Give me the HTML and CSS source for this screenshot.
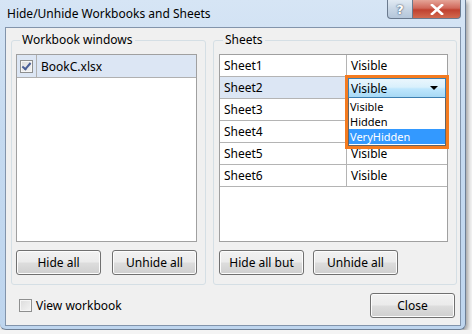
FILE: index.html
```html
<!DOCTYPE html>
<html lang="en">
<head>
    <meta charset="UTF-8">
    <title>Hide/Unhide Workbooks and Sheets</title>
    <link rel="stylesheet" href="styles.css">
</head>
<body>
<div class="window">
    <div class="titlebar">
        <span class="title">Hide/Unhide Workbooks and Sheets</span>
        <div class="caption-buttons">
            <button class="cap-help">?</button>
            <button class="cap-close">
                <svg width="14" height="11" viewBox="0 0 14 11">
                    <path d="M2 1 L12 10 M12 1 L2 10" stroke="#fff" stroke-width="2.6" stroke-linecap="square"/>
                </svg>
            </button>
        </div>
    </div>

    <div class="client">
        <div class="groups">
            <fieldset class="group group-books">
                <legend>Workbook windows</legend>
                <div class="listbox">
                    <div class="book-row selected">
                        <span class="check-cell"><span class="checkbox checked"></span></span>
                        <span class="book-name">BookC.xlsx</span>
                    </div>
                </div>
                <div class="button-row">
                    <button class="btn">Hide all</button>
                    <button class="btn">Unhide all</button>
                </div>
            </fieldset>

            <fieldset class="group group-sheets">
                <legend>Sheets</legend>
                <div class="grid-wrap">
                    <table class="sheet-grid">
                        <tr><td>Sheet1</td><td>Visible</td></tr>
                        <tr class="selected"><td>Sheet2</td><td class="combo-cell"></td></tr>
                        <tr><td>Sheet3</td><td></td></tr>
                        <tr><td>Sheet4</td><td></td></tr>
                        <tr><td>Sheet5</td><td>Visible</td></tr>
                        <tr><td>Sheet6</td><td>Visible</td></tr>
                    </table>

                    <div class="dropdown">
                        <div class="combo">
                            <span>Visible</span>
                            <span class="arrow"></span>
                        </div>
                        <ul class="options">
                            <li>Visible</li>
                            <li>Hidden</li>
                            <li class="active">VeryHidden</li>
                        </ul>
                    </div>
                </div>
                <div class="button-row">
                    <button class="btn">Hide all but</button>
                    <button class="btn">Unhide all</button>
                </div>
            </fieldset>
        </div>

        <div class="footer-row">
            <label class="view-check"><span class="checkbox"></span>View workbook</label>
            <button class="btn">Close</button>
        </div>
    </div>
</div>
</body>
</html>
```

FILE: styles.css
```css
body {
    margin: 0;
    background: #f4f4f4;
    font-family: "Noto Sans", "DejaVu Sans", sans-serif;
    font-size: 12px;
    color: #000;
}

.window {
    width: 465px;
    height: 329px;
    background: linear-gradient(180deg, #d6e5f5 0%, #c5daf0 40%, #bed5ee 100%);
    border: 1px solid #6d7f96;
    border-top: none;
    border-left: none;
    border-radius: 0 0 6px 6px;
    box-shadow: 2px 2px 4px rgba(0, 0, 0, 0.35);
    display: flex;
    flex-direction: column;
}

.titlebar {
    height: 27px;
    display: flex;
    align-items: flex-start;
}

.title {
    padding: 5px 0 0 7px;
    font-size: 12px;
    color: #000;
}

.caption-buttons {
    margin-left: auto;
    margin-right: 4px;
    display: flex;
}

.caption-buttons button {
    height: 19px;
    border: 1px solid #6a7a8e;
    border-top: none;
    padding: 0;
    display: flex;
    align-items: center;
    justify-content: center;
}

.cap-help {
    width: 26px;
    border-radius: 0 0 0 4px;
    background: linear-gradient(180deg, #e1eaf3 0%, #c8d6e5 50%, #b4c6da 100%);
    color: #fff;
    font-family: "DejaVu Sans", sans-serif;
    font-weight: bold;
    font-size: 13px;
    text-shadow: 0 0 2px #42556e, 0 0 1px #42556e;
}

.cap-close {
    width: 48px;
    border-left: none !important;
    border-radius: 0 0 4px 0;
    background: linear-gradient(180deg, #e5a497 0%, #d0685a 45%, #c0412f 55%, #d26a4f 100%);
}

.client {
    flex: 1;
    margin: 0 4px 3px 5px;
    background: #f0f0f0;
    border: 1px solid #8294ab;
    display: flex;
    flex-direction: column;
    padding: 4px 5px 0 5px;
}

.groups {
    display: flex;
    gap: 7px;
}

.group {
    margin: 0;
    border: 1px solid #d5dfe5;
    border-radius: 3px;
    padding: 0 8px 0 4px;
    height: 253px;
    box-sizing: border-box;
    display: flex;
    flex-direction: column;
}

.group legend {
    padding: 0 2px;
    margin-left: 4px;
    font-size: 12px;
    line-height: 16px;
}

.group-books {
    width: 194px;
}

.group-sheets {
    width: 244px;
    padding-left: 5px;
}

.listbox {
    height: 188px;
    background: #fff;
    border: 1px solid #a0a0a0;
    box-sizing: border-box;
    margin-top: 6px;
}

.book-row {
    height: 22px;
    display: flex;
    align-items: center;
    border-bottom: 1px solid #b0b0b0;
}

.book-row.selected {
    background: #dce6f4;
}

.check-cell {
    width: 19px;
    height: 100%;
    display: flex;
    align-items: center;
    justify-content: center;
    border-right: 1px solid #b0b0b0;
}

.book-name {
    padding-left: 4px;
}

.checkbox {
    display: inline-block;
    width: 11px;
    height: 11px;
    border: 1px solid #8e8f8f;
    background: linear-gradient(135deg, #dcdcdc 0%, #f4f4f4 100%);
    box-shadow: inset 0 0 0 1px #f6f6f6;
    position: relative;
}

.checkbox.checked::after {
    content: "";
    position: absolute;
    left: 3px;
    top: 0;
    width: 3px;
    height: 7px;
    border: solid #4a5f97;
    border-width: 0 2px 2px 0;
    transform: rotate(40deg);
}

.button-row {
    display: flex;
    gap: 11px;
    margin-top: 8px;
}

.group-sheets .button-row {
    gap: 9px;
}

.btn {
    width: 85px;
    height: 25px;
    border: 1px solid #707070;
    border-radius: 3px;
    background: linear-gradient(180deg, #f2f2f2 0%, #ebebeb 48%, #dddddd 52%, #cfcfcf 100%);
    box-shadow: inset 0 0 0 1px #fcfcfc;
    font-family: "Noto Sans", "DejaVu Sans", sans-serif;
    font-size: 12px;
    color: #000;
    padding: 0;
}

.grid-wrap {
    position: relative;
    height: 188px;
    background: #fff;
    border: 1px solid #a0a0a0;
    box-sizing: border-box;
    margin-top: 6px;
}

.sheet-grid {
    border-collapse: collapse;
    width: 227px;
}

.sheet-grid td {
    height: 21px;
    padding: 0 0 0 4px;
    border: 1px solid #b4b4b4;
    border-top: none;
    border-left: none;
    width: 122px;
}

.sheet-grid td + td {
    width: auto;
    border-right: none;
}

.sheet-grid tr.selected td:first-child {
    background: #dce6f4;
}

.dropdown {
    position: absolute;
    left: 125px;
    top: 20px;
    width: 98px;
    border: 3px solid #f47b20;
    background: #fff;
}

.combo {
    height: 20px;
    box-sizing: border-box;
    border: 1px solid #3c7fb1;
    background: linear-gradient(180deg, #eaf6fd 0%, #d9f0fc 45%, #bee6fd 55%, #a7d9f5 100%);
    display: flex;
    align-items: center;
    padding: 0 4px 0 2px;
}

.arrow {
    margin-left: auto;
    margin-right: 3px;
    border-left: 4px solid transparent;
    border-right: 4px solid transparent;
    border-top: 4px solid #000;
}

.options {
    list-style: none;
    margin: 0;
    padding: 1px 0;
    border: 1px solid #646464;
    border-top: none;
    font-size: 11px;
}

.options li {
    height: 15px;
    line-height: 15px;
    padding-left: 1px;
}

.options li.active {
    background: #3399ff;
    color: #fff;
}

.footer-row {
    display: flex;
    align-items: center;
    justify-content: space-between;
    margin-top: 8px;
    padding-left: 8px;
}

.view-check {
    display: flex;
    align-items: center;
    gap: 4px;
}
```
